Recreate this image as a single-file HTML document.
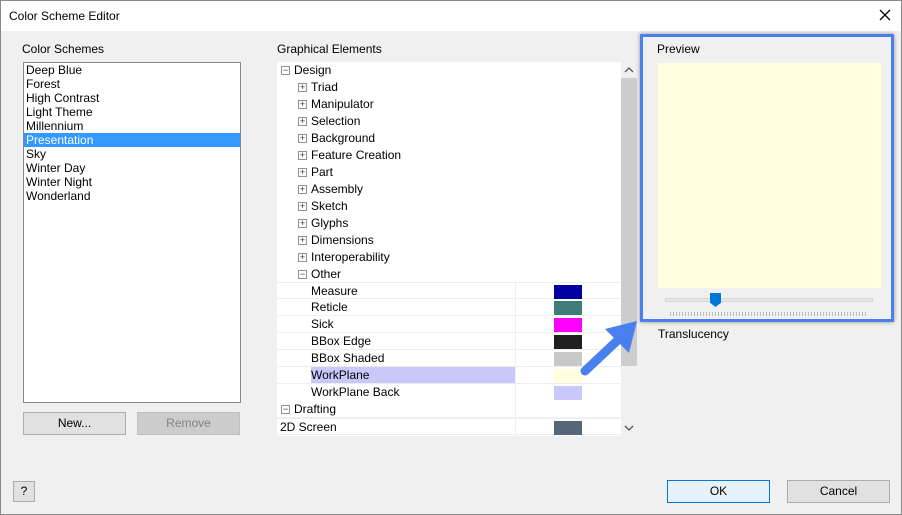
<!DOCTYPE html>
<html><head><style>
*{margin:0;padding:0;box-sizing:border-box}
body{width:902px;height:515px;background:#f0f0f0;font-family:"Liberation Sans",sans-serif;font-size:12px;color:#000;position:relative;overflow:hidden}
.frame{position:absolute;left:0;top:0;width:902px;height:515px;border:1px solid #8a8a8a;pointer-events:none}
.a{position:absolute}
.title{left:0;top:0;width:902px;height:31px;background:#fff}
.list{left:23px;top:62px;width:218px;height:341px;background:#fff;border:1px solid #828790}
.list div{height:14px;line-height:14px;padding-left:2px}
.btn{height:23px;border:1px solid #adadad;background:#e1e1e1;text-align:center;line-height:21px}
.tree{left:277px;top:62px;width:360px;height:374px;background:#fff;overflow:hidden}
.r{position:absolute;height:17px;line-height:17px;left:0;width:344px}
.pm{position:absolute;width:9px;height:9px;border:1px solid #919191;top:4px;font-size:9px;line-height:7px;text-align:center;color:#333}
.sw{position:absolute;left:277px;top:2px;width:28px;height:14px}
.ln{border-bottom:1px solid #eee}
</style></head><body>
<div class="a title"></div>
<div class="a" style="left:9px;top:9px;font-size:12px">Color Scheme Editor</div>
<svg class="a" style="left:879px;top:9px" width="12" height="12"><path d="M1 1L11 11M11 1L1 11" stroke="#000" stroke-width="1.3"/></svg>
<div class="a" style="left:22px;top:42px">Color Schemes</div>
<div class="a list">
<div>Deep Blue</div><div>Forest</div><div>High Contrast</div><div>Light Theme</div><div>Millennium</div>
<div style="background:#3399ff;color:#fff">Presentation</div><div>Sky</div><div>Winter Day</div><div>Winter Night</div><div>Wonderland</div>
</div>
<div class="a btn" style="left:23px;top:412px;width:103px">New...</div>
<div class="a btn" style="left:137px;top:412px;width:103px;background:#cccccc;border-color:#bfbfbf;color:#838383">Remove</div>
<div class="a" style="left:277px;top:42px">Graphical Elements</div>
<div class="a tree">
<div class="r"><span class="pm" style="left:4px">−</span><span style="position:absolute;left:17px">Design</span></div>
<div class="r" style="top:17px"><span class="pm" style="left:21px">+</span><span style="position:absolute;left:34px">Triad</span></div>
<div class="r" style="top:34px"><span class="pm" style="left:21px">+</span><span style="position:absolute;left:34px">Manipulator</span></div>
<div class="r" style="top:51px"><span class="pm" style="left:21px">+</span><span style="position:absolute;left:34px">Selection</span></div>
<div class="r" style="top:68px"><span class="pm" style="left:21px">+</span><span style="position:absolute;left:34px">Background</span></div>
<div class="r" style="top:85px"><span class="pm" style="left:21px">+</span><span style="position:absolute;left:34px">Feature Creation</span></div>
<div class="r" style="top:102px"><span class="pm" style="left:21px">+</span><span style="position:absolute;left:34px">Part</span></div>
<div class="r" style="top:119px"><span class="pm" style="left:21px">+</span><span style="position:absolute;left:34px">Assembly</span></div>
<div class="r" style="top:136px"><span class="pm" style="left:21px">+</span><span style="position:absolute;left:34px">Sketch</span></div>
<div class="r" style="top:153px"><span class="pm" style="left:21px">+</span><span style="position:absolute;left:34px">Glyphs</span></div>
<div class="r" style="top:170px"><span class="pm" style="left:21px">+</span><span style="position:absolute;left:34px">Dimensions</span></div>
<div class="r" style="top:187px"><span class="pm" style="left:21px">+</span><span style="position:absolute;left:34px">Interoperability</span></div>
<div class="r" style="top:204px"><span class="pm" style="left:21px">−</span><span style="position:absolute;left:34px">Other</span></div>
<div class="r ln" style="top:220px;border-top:1px solid #eee"><span style="position:absolute;left:34px">Measure</span><i class="sw" style="background:#0000a0"></i></div>
<div class="r ln" style="top:237px"><span style="position:absolute;left:34px">Reticle</span><i class="sw" style="background:#3e7e7a"></i></div>
<div class="r ln" style="top:254px"><span style="position:absolute;left:34px">Sick</span><i class="sw" style="background:#ff00ff"></i></div>
<div class="r ln" style="top:271px"><span style="position:absolute;left:34px">BBox Edge</span><i class="sw" style="background:#202020"></i></div>
<div class="r ln" style="top:288px"><span style="position:absolute;left:34px">BBox Shaded</span><i class="sw" style="background:#c8c8c8"></i></div>
<div class="r ln" style="top:305px"><span style="position:absolute;left:34px;width:204px;height:16px;background:#c8c8fb">WorkPlane</span><i class="sw" style="background:#ffffe0"></i></div>
<div class="r" style="top:322px"><span style="position:absolute;left:34px">WorkPlane Back</span><i class="sw" style="background:#c8c8fb"></i></div>
<div class="r ln" style="top:339px"><span class="pm" style="left:4px">−</span><span style="position:absolute;left:17px">Drafting</span></div>
<div class="r ln" style="top:356px;border-top:1px solid #eee"><span style="position:absolute;left:3px">2D Screen</span><i class="sw" style="background:#586478"></i></div>
<div class="a" style="left:238px;top:220px;width:1px;height:160px;background:#eee"></div>
<div class="a" style="left:344px;top:0;width:16px;height:374px;background:#f0f0f0"></div>
<div class="a" style="left:344px;top:16px;width:16px;height:288px;background:#cdcdcd"></div>
<svg class="a" style="left:347px;top:5px" width="10" height="6"><path d="M1 5L5 1L9 5" stroke="#555" fill="none" stroke-width="1.3"/></svg>
<svg class="a" style="left:347px;top:363px" width="10" height="6"><path d="M1 1L5 5L9 1" stroke="#555" fill="none" stroke-width="1.3"/></svg>
</div>
<div class="a" style="left:640px;top:34px;width:254px;height:288px;border:3px solid #4a7ff0;box-shadow:0 0 4px rgba(0,0,0,.4)"></div>
<div class="a" style="left:657px;top:42px">Preview</div>
<div class="a" style="left:658px;top:63px;width:223px;height:225px;background:#ffffe0"></div>
<div class="a" style="left:665px;top:298px;width:208px;height:4px;border:1px solid #d6d6d6;background:#e7e7e7"></div>
<div class="a" style="left:710px;top:293px;width:11px;height:14px;background:#0078d7;clip-path:polygon(0 0,100% 0,100% 70%,50% 100%,0 70%)"></div>
<div class="a" style="left:670px;top:312px;width:198px;height:4px;background:repeating-linear-gradient(90deg,#bbb 0 1px,transparent 1px 3px)"></div>
<div class="a" style="left:658px;top:327px">Translucency</div>
<svg class="a" style="left:575px;top:315px" width="70" height="65"><path d="M10 56 L44 24" stroke="#4a7ff0" stroke-width="9" stroke-linecap="round"/><polygon points="30,14 62,6 54,38" fill="#4a7ff0"/></svg>
<div class="a" style="left:13px;top:481px;width:22px;height:21px;border:1px solid #adadad;background:#e1e1e1;text-align:center;font-size:12px;line-height:18px">?</div>
<div class="a btn" style="left:667px;top:480px;width:103px;background:#e5f1fb;border-color:#0078d7">OK</div>
<div class="a btn" style="left:787px;top:480px;width:103px">Cancel</div>
<div class="frame"></div>
</body></html>
